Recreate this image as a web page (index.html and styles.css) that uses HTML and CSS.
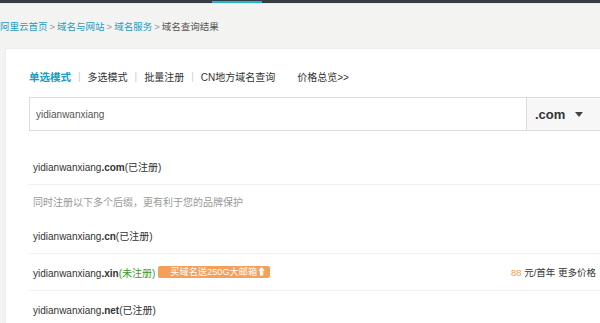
FILE: index.html
```html
<!DOCTYPE html>
<html lang="zh-CN">
  <head>
    <meta charset="UTF-8" />
    <meta name="viewport" content="width=device-width, initial-scale=1.0" />
    <title>域名查询结果</title>
    <link rel="stylesheet" href="styles.css">
  </head>
  <body>
    <div class="topbar"><span class="topbar-active"></span></div>

    <div class="crumbs">
      <a href="#">阿里云首页</a><span class="gt">&gt;</span><a href="#">域名与网站</a><span class="gt">&gt;</span><a href="#">域名服务</a><span class="gt">&gt;</span><span class="current">域名查询结果</span>
    </div>

    <div class="panel">
      <div class="tabs">
        <a href="#" class="tab active">单选模式</a>
        <span class="sep">|</span>
        <a href="#" class="tab">多选模式</a>
        <span class="sep">|</span>
        <a href="#" class="tab">批量注册</a>
        <span class="sep">|</span>
        <a href="#" class="tab">CN地方域名查询</a>
        <a href="#" class="tab price-link">价格总览&gt;&gt;</a>
      </div>

      <div class="search">
        <input type="text" class="search-input" value="yidianwanxiang" />
        <div class="suffix">.com <span class="caret"></span></div>
      </div>

      <ul class="results">
        <li class="row line">
          <span>yidianwanxiang<b>.com</b>(已注册)</span>
        </li>
        <li class="row hint">同时注册以下多个后缀，更有利于您的品牌保护</li>
        <li class="row line">
          <span>yidianwanxiang<b>.cn</b>(已注册)</span>
        </li>
        <li class="row line">
          <span>yidianwanxiang<b>.xin</b><span class="free">(未注册)</span></span>
          <span class="promo">买域名送250G大邮箱⬆</span>
          <span class="price"><span class="num">88</span> 元/首年 <a href="#">更多价格</a></span>
        </li>
        <li class="row">
          <span>yidianwanxiang<b>.net</b>(已注册)</span>
        </li>
      </ul>
    </div>
  </body>
</html>
```

FILE: styles.css
```css
html,
body {
  overflow: hidden;
}
body {
  margin: 0;
  background-color: #f3f3f1;
  font-family: "Liberation Sans", "Noto Sans CJK SC", sans-serif;
  font-size: 10px;
  color: #333;
}
a {
  text-decoration: none;
  color: inherit;
}
.topbar {
  height: 3px;
  background-color: #373d41;
  border-bottom: 1px solid #e3e8e6;
  position: relative;
}
.topbar-active {
  position: absolute;
  left: 212px;
  bottom: 0;
  width: 50px;
  height: 2px;
  background-color: #22b4cf;
}
.crumbs {
  height: 44px;
  line-height: 46px;
  font-size: 9.5px;
  color: #999;
}
.crumbs a {
  color: #1a9ec2;
}
.crumbs .gt {
  margin: 0 2px;
}
.crumbs .current {
  color: #555;
}
.panel {
  margin-left: 5px;
  width: 578px;
  padding: 14px 15px 0 23px;
  background-color: #fff;
  border: 1px solid #eee;
}
.tabs {
  display: flex;
  align-items: center;
  height: 26px;
}
.tab {
  color: #333;
}
.tab.active {
  color: #1a9ec2;
  font-weight: bold;
  font-size: 10.5px;
}
.sep {
  color: #ccc;
  margin: 0 7px;
}
.price-link {
  margin-left: 22px;
}
.search {
  display: flex;
  margin-top: 8px;
  height: 32px;
  border: 1px solid #ddd;
}
.search-input {
  flex: 1;
  border: none;
  padding: 0 6px;
  font-family: inherit;
  font-size: 10px;
  color: #555;
  outline: none;
}
.suffix {
  width: 71px;
  padding-left: 8px;
  display: flex;
  align-items: center;
  border-left: 1px solid #ddd;
  background-color: #f7f7f7;
  font-size: 13px;
  font-weight: bold;
  color: #333;
}
.caret {
  margin-left: 10px;
  border-left: 4px solid transparent;
  border-right: 4px solid transparent;
  border-top: 5px solid #444;
}
.results {
  list-style: none;
  margin: 17px 0 0;
  padding: 0;
}
.row {
  display: flex;
  align-items: center;
  height: 36px;
  padding-left: 4px;
}
.row.line {
  border-bottom: 1px solid #f0f0f0;
}
.row.hint {
  height: 32px;
  color: #999;
}
.row b {
  font-weight: bold;
}
.free {
  color: #3c9a2a;
}
.promo {
  margin-left: 3px;
  padding: 0 4px 0 12px;
  height: 12px;
  line-height: 12px;
  font-size: 9.2px;
  color: #fff;
  background-color: #f5a05a;
  border-radius: 2px;
}
.price {
  margin-left: auto;
  margin-right: 11px;
  font-size: 9.5px;
  color: #333;
}
.price .num {
  color: #f0a040;
}
```
